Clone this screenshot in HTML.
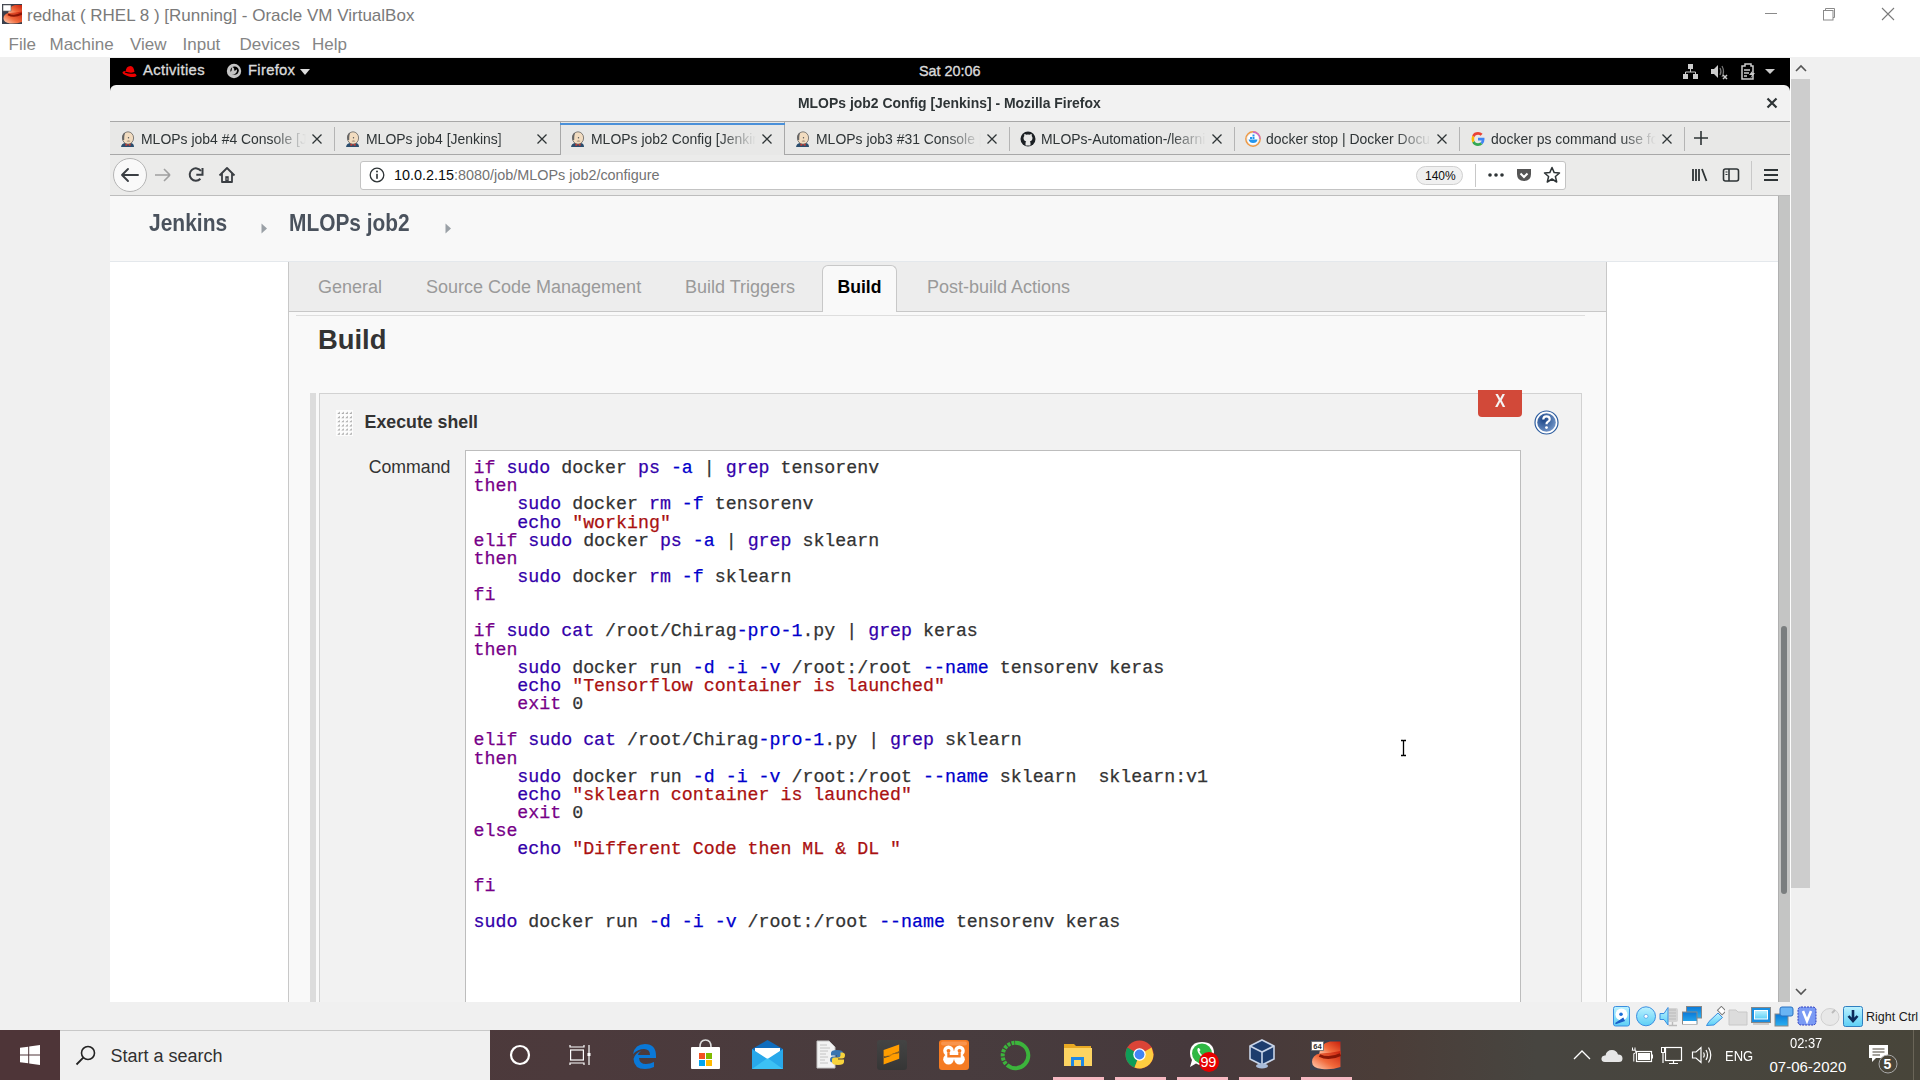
<!DOCTYPE html><html><head><meta charset="utf-8"><title>MLOPs job2 Config</title>
<style>
html,body{margin:0;padding:0;}
body{width:1920px;height:1080px;position:relative;overflow:hidden;background:#f0f0f0;font-family:'Liberation Sans',sans-serif;}
div,svg{box-sizing:border-box;}
</style></head><body>

<div style="position:absolute;left:0px;top:0px;width:1920px;height:57px;background:#ffffff"></div>
<div style="position:absolute;left:27.00px;top:6.61px;font-size:17px;line-height:17px;height:17px;color:#7a7a7a;font-weight:normal;font-family:'Liberation Sans',sans-serif;white-space:pre;">redhat ( RHEL 8 ) [Running] - Oracle VM VirtualBox</div>
<svg style="position:absolute;left:2px;top:4px;" width="20" height="20" viewBox="0 0 20 20"><defs><linearGradient id="rhg2" x1="0" y1="1" x2="1" y2="0"><stop offset="0" stop-color="#ffd6bd"/><stop offset="0.45" stop-color="#f26a3c"/><stop offset="1" stop-color="#c8200c"/></linearGradient></defs><rect width="20" height="20" fill="#3a3f4c"/><path d="M6 10Q6.5 2 13 1H20V10.5Z" fill="url(#rhg2)"/><path d="M1.5 14.5Q1.5 10 6.5 9Q13 8.5 20 7.5V18Q14 20 8 19.5Q1.5 18.5 1.5 14.5Z" fill="url(#rhg2)"/><path d="M6 10.3Q12.5 13.5 20 9.5" stroke="#8a1606" stroke-width="2" fill="none"/><rect x="1" y="1" width="8" height="6" fill="#fff" stroke="#666" stroke-width="0.6"/></svg>
<div style="position:absolute;left:1765px;top:13px;width:12px;height:1px;background:#8a8a8a"></div>
<svg style="position:absolute;left:1822px;top:7px;" width="14" height="14" viewBox="0 0 14 14"><rect x="1.5" y="3.5" width="9.5" height="9.5" fill="none" stroke="#8a8a8a"/><path d="M3.5 3.5V1.5H12.5V10.5H11" fill="none" stroke="#8a8a8a"/></svg>
<svg style="position:absolute;left:1881px;top:7px;" width="14" height="14" viewBox="0 0 14 14"><path d="M1 1L13 13M13 1L1 13" stroke="#7a7a7a" stroke-width="1.1"/></svg>
<div style="position:absolute;left:8.50px;top:35.61px;font-size:17px;line-height:17px;height:17px;color:#858585;font-weight:normal;font-family:'Liberation Sans',sans-serif;white-space:pre;">File</div>
<div style="position:absolute;left:49.50px;top:35.61px;font-size:17px;line-height:17px;height:17px;color:#858585;font-weight:normal;font-family:'Liberation Sans',sans-serif;white-space:pre;">Machine</div>
<div style="position:absolute;left:130.00px;top:35.61px;font-size:17px;line-height:17px;height:17px;color:#858585;font-weight:normal;font-family:'Liberation Sans',sans-serif;white-space:pre;">View</div>
<div style="position:absolute;left:182.50px;top:35.61px;font-size:17px;line-height:17px;height:17px;color:#858585;font-weight:normal;font-family:'Liberation Sans',sans-serif;white-space:pre;">Input</div>
<div style="position:absolute;left:239.50px;top:35.61px;font-size:17px;line-height:17px;height:17px;color:#858585;font-weight:normal;font-family:'Liberation Sans',sans-serif;white-space:pre;">Devices</div>
<div style="position:absolute;left:312.00px;top:35.61px;font-size:17px;line-height:17px;height:17px;color:#858585;font-weight:normal;font-family:'Liberation Sans',sans-serif;white-space:pre;">Help</div>
<div style="position:absolute;left:110px;top:58px;width:1680px;height:27px;background:#000"></div>
<svg style="position:absolute;left:122px;top:65px;" width="16" height="13" viewBox="0 0 16 13"><ellipse cx="7.5" cy="9" rx="7.2" ry="2.6" fill="#e00" transform="rotate(14 7.5 9)"/><path d="M3.5 7.3Q4 1 8.5 1Q12 1.3 12.5 7.5Z" fill="#e00"/><path d="M3 7Q8 9 13 7.6" stroke="#000" stroke-width="1.1" fill="none"/></svg>
<div style="position:absolute;left:143.00px;top:63.27px;font-size:14.8px;line-height:14.8px;height:14.8px;color:#dadada;font-weight:normal;font-family:'Liberation Sans',sans-serif;white-space:pre;-webkit-text-stroke:0.35px #dadada;letter-spacing:0.35px;">Activities</div>
<svg style="position:absolute;left:226px;top:63px;" width="16" height="16" viewBox="0 0 16 16"><circle cx="8" cy="8" r="7.2" fill="#c4c4c4"/><circle cx="8.6" cy="7.6" r="4.2" fill="#000"/><path d="M6 4Q9 5 8 7.5Q10 8 11 6Q11.5 10 8 11.5Q5 12 4 9Q6 9 6 4Z" fill="#c4c4c4"/></svg>
<div style="position:absolute;left:248.00px;top:63.27px;font-size:14.8px;line-height:14.8px;height:14.8px;color:#dadada;font-weight:normal;font-family:'Liberation Sans',sans-serif;white-space:pre;-webkit-text-stroke:0.35px #dadada;letter-spacing:0.3px;">Firefox</div>
<svg style="position:absolute;left:300px;top:69px;" width="11" height="7" viewBox="0 0 11 7"><path d="M0 0H10L5 6Z" fill="#ddd"/></svg>
<div style="position:absolute;left:919.00px;top:63.61px;font-size:14.4px;line-height:14.4px;height:14.4px;color:#dadada;font-weight:normal;font-family:'Liberation Sans',sans-serif;white-space:pre;-webkit-text-stroke:0.35px #dadada;">Sat 20:06</div>
<svg style="position:absolute;left:1683px;top:64px;" width="16" height="16" viewBox="0 0 16 16"><rect x="5" y="0" width="5" height="5" fill="#ccc"/><rect x="0" y="10" width="5" height="5" fill="#ccc"/><rect x="10" y="10" width="5" height="5" fill="#ccc"/><path d="M7.5 5V8M2.5 10V8H12.5V10" stroke="#ccc" fill="none"/></svg>
<svg style="position:absolute;left:1710px;top:64px;" width="18" height="16" viewBox="0 0 18 16"><path d="M1 5H4L8 1V14L4 10H1Z" fill="#ccc"/><path d="M10 4Q12 7.5 10 11M12 2Q15 7.5 12 13" stroke="#777" fill="none" stroke-width="1.2"/><path d="M13 11L17 15M17 11L13 15" stroke="#ccc" stroke-width="1.5"/></svg>
<svg style="position:absolute;left:1741px;top:63px;" width="16" height="17" viewBox="0 0 16 17"><path d="M4 1H10V3H12V16H1V3H4Z" fill="none" stroke="#ccc" stroke-width="1.5"/><path d="M3 7H9M3 10H8M3 13H6" stroke="#ccc" stroke-width="1.5"/><path d="M12 7L8 12H11L9 16L14 10H11Z" fill="#ccc"/></svg>
<svg style="position:absolute;left:1765px;top:69px;" width="11" height="6" viewBox="0 0 11 6"><path d="M0 0H10L5 5Z" fill="#ccc"/></svg>
<div style="position:absolute;left:110px;top:85px;width:1680px;height:8px;background:#000"></div>
<div style="position:absolute;left:110px;top:85px;width:1680px;height:917px;background:#f2f2f2;border-radius:6px 6px 0 0"></div>
<div style="position:absolute;left:798.00px;top:95.84px;font-size:14.6px;line-height:14.6px;height:14.6px;color:#2e3436;font-weight:bold;font-family:'Liberation Sans',sans-serif;white-space:pre;transform:scaleX(0.955);transform-origin:0 0;">MLOPs job2 Config [Jenkins] - Mozilla Firefox</div>
<svg style="position:absolute;left:1766px;top:97px;" width="12" height="12" viewBox="0 0 12 12"><path d="M1.5 1.5L10.5 10.5M10.5 1.5L1.5 10.5" stroke="#2e3436" stroke-width="2.2"/></svg>
<div style="position:absolute;left:110px;top:121px;width:1680px;height:1px;background:#a8a8a8"></div>
<div style="position:absolute;left:110px;top:122px;width:1680px;height:32px;background:#e8e8e7"></div>
<div style="position:absolute;left:110px;top:154px;width:1680px;height:1px;background:#a8a8a8"></div>
<div style="position:absolute;left:334px;top:127px;width:1px;height:24px;background:#b4b4b4"></div>
<svg style="position:absolute;left:120px;top:131px;" width="16" height="16" viewBox="0 0 16 16"><path d="M1 16Q1.5 12.5 5 12L11 12Q14 12.5 14 16Z" fill="#2a4d6e"/><ellipse cx="8" cy="7" rx="5.6" ry="6.2" fill="#f2dcc0" stroke="#555" stroke-width="0.7"/><path d="M2.6 9Q1.8 5 3 3Q4 1.5 5.5 1.5Q4 3.5 4.2 9Z" fill="#666"/><path d="M6.5 10Q8.5 9 10.5 10Q8.5 11 6.5 10Z" fill="#8a7460"/><circle cx="8.5" cy="6.8" r="0.7" fill="#555"/><path d="M5.5 12.5L8 14L10.5 12.5V15L8 14L5.5 15Z" fill="#e03a2a"/></svg>
<div style="position:absolute;left:141px;top:127px;width:165px;height:22px;overflow:hidden;-webkit-mask-image:linear-gradient(to right,#000 130px,transparent 165px);mask-image:linear-gradient(to right,#000 130px,transparent 165px)">
<div style="position:absolute;left:0;top:4.10px;font-size:15px;line-height:15px;color:#2e3436;white-space:pre;transform:scaleX(0.93);transform-origin:0 0">MLOPs job4 #4 Console [Jenkins]</div></div>
<svg style="position:absolute;left:311px;top:133px;" width="12" height="12" viewBox="0 0 12 12"><path d="M1.5 1.5L10.5 10.5M10.5 1.5L1.5 10.5" stroke="#2e3436" stroke-width="1.3"/></svg>
<svg style="position:absolute;left:345px;top:131px;" width="16" height="16" viewBox="0 0 16 16"><path d="M1 16Q1.5 12.5 5 12L11 12Q14 12.5 14 16Z" fill="#2a4d6e"/><ellipse cx="8" cy="7" rx="5.6" ry="6.2" fill="#f2dcc0" stroke="#555" stroke-width="0.7"/><path d="M2.6 9Q1.8 5 3 3Q4 1.5 5.5 1.5Q4 3.5 4.2 9Z" fill="#666"/><path d="M6.5 10Q8.5 9 10.5 10Q8.5 11 6.5 10Z" fill="#8a7460"/><circle cx="8.5" cy="6.8" r="0.7" fill="#555"/><path d="M5.5 12.5L8 14L10.5 12.5V15L8 14L5.5 15Z" fill="#e03a2a"/></svg>
<div style="position:absolute;left:366px;top:127px;width:165px;height:22px;overflow:hidden;-webkit-mask-image:linear-gradient(to right,#000 130px,transparent 165px);mask-image:linear-gradient(to right,#000 130px,transparent 165px)">
<div style="position:absolute;left:0;top:4.10px;font-size:15px;line-height:15px;color:#2e3436;white-space:pre;transform:scaleX(0.93);transform-origin:0 0">MLOPs job4 [Jenkins]</div></div>
<svg style="position:absolute;left:536px;top:133px;" width="12" height="12" viewBox="0 0 12 12"><path d="M1.5 1.5L10.5 10.5M10.5 1.5L1.5 10.5" stroke="#2e3436" stroke-width="1.3"/></svg>
<div style="position:absolute;left:560px;top:122px;width:225px;height:33px;background:#e8e8e7;border-left:1px solid #a8a8a8;border-right:1px solid #a8a8a8"></div>
<div style="position:absolute;left:560px;top:123px;width:225px;height:2px;background:#4a90d9"></div>
<svg style="position:absolute;left:570px;top:131px;" width="16" height="16" viewBox="0 0 16 16"><path d="M1 16Q1.5 12.5 5 12L11 12Q14 12.5 14 16Z" fill="#2a4d6e"/><ellipse cx="8" cy="7" rx="5.6" ry="6.2" fill="#f2dcc0" stroke="#555" stroke-width="0.7"/><path d="M2.6 9Q1.8 5 3 3Q4 1.5 5.5 1.5Q4 3.5 4.2 9Z" fill="#666"/><path d="M6.5 10Q8.5 9 10.5 10Q8.5 11 6.5 10Z" fill="#8a7460"/><circle cx="8.5" cy="6.8" r="0.7" fill="#555"/><path d="M5.5 12.5L8 14L10.5 12.5V15L8 14L5.5 15Z" fill="#e03a2a"/></svg>
<div style="position:absolute;left:591px;top:127px;width:165px;height:22px;overflow:hidden;-webkit-mask-image:linear-gradient(to right,#000 130px,transparent 165px);mask-image:linear-gradient(to right,#000 130px,transparent 165px)">
<div style="position:absolute;left:0;top:4.10px;font-size:15px;line-height:15px;color:#2e3436;white-space:pre;transform:scaleX(0.93);transform-origin:0 0">MLOPs job2 Config [Jenkins]</div></div>
<svg style="position:absolute;left:761px;top:133px;" width="12" height="12" viewBox="0 0 12 12"><path d="M1.5 1.5L10.5 10.5M10.5 1.5L1.5 10.5" stroke="#2e3436" stroke-width="1.3"/></svg>
<div style="position:absolute;left:1009px;top:127px;width:1px;height:24px;background:#b4b4b4"></div>
<svg style="position:absolute;left:795px;top:131px;" width="16" height="16" viewBox="0 0 16 16"><path d="M1 16Q1.5 12.5 5 12L11 12Q14 12.5 14 16Z" fill="#2a4d6e"/><ellipse cx="8" cy="7" rx="5.6" ry="6.2" fill="#f2dcc0" stroke="#555" stroke-width="0.7"/><path d="M2.6 9Q1.8 5 3 3Q4 1.5 5.5 1.5Q4 3.5 4.2 9Z" fill="#666"/><path d="M6.5 10Q8.5 9 10.5 10Q8.5 11 6.5 10Z" fill="#8a7460"/><circle cx="8.5" cy="6.8" r="0.7" fill="#555"/><path d="M5.5 12.5L8 14L10.5 12.5V15L8 14L5.5 15Z" fill="#e03a2a"/></svg>
<div style="position:absolute;left:816px;top:127px;width:165px;height:22px;overflow:hidden;-webkit-mask-image:linear-gradient(to right,#000 130px,transparent 165px);mask-image:linear-gradient(to right,#000 130px,transparent 165px)">
<div style="position:absolute;left:0;top:4.10px;font-size:15px;line-height:15px;color:#2e3436;white-space:pre;transform:scaleX(0.93);transform-origin:0 0">MLOPs job3 #31 Console [Jenkins]</div></div>
<svg style="position:absolute;left:986px;top:133px;" width="12" height="12" viewBox="0 0 12 12"><path d="M1.5 1.5L10.5 10.5M10.5 1.5L1.5 10.5" stroke="#2e3436" stroke-width="1.3"/></svg>
<div style="position:absolute;left:1234px;top:127px;width:1px;height:24px;background:#b4b4b4"></div>
<svg style="position:absolute;left:1020px;top:131px;" width="16" height="16" viewBox="0 0 16 16"><circle cx="8" cy="8" r="7.5" fill="#1b1f23"/><path d="M5.5 14.5V12Q5.5 11 6.2 10.4Q3.5 10 3.5 7Q3.5 5.8 4.3 5Q4 4 4.4 3Q5.4 3 6.4 3.8Q8 3.3 9.6 3.8Q10.6 3 11.6 3Q12 4 11.7 5Q12.5 5.8 12.5 7Q12.5 10 9.8 10.4Q10.5 11 10.5 12V14.5Z" fill="#e8e8e7"/></svg>
<div style="position:absolute;left:1041px;top:127px;width:165px;height:22px;overflow:hidden;-webkit-mask-image:linear-gradient(to right,#000 130px,transparent 165px);mask-image:linear-gradient(to right,#000 130px,transparent 165px)">
<div style="position:absolute;left:0;top:4.10px;font-size:15px;line-height:15px;color:#2e3436;white-space:pre;transform:scaleX(0.93);transform-origin:0 0">MLOPs-Automation-/learning</div></div>
<svg style="position:absolute;left:1211px;top:133px;" width="12" height="12" viewBox="0 0 12 12"><path d="M1.5 1.5L10.5 10.5M10.5 1.5L1.5 10.5" stroke="#2e3436" stroke-width="1.3"/></svg>
<div style="position:absolute;left:1459px;top:127px;width:1px;height:24px;background:#b4b4b4"></div>
<svg style="position:absolute;left:1245px;top:131px;" width="16" height="16" viewBox="0 0 16 16"><circle cx="8" cy="8" r="7.2" fill="none" stroke="#e94" stroke-width="1.4"/><path d="M8 1 A7 7 0 0 1 15 8" fill="none" stroke="#c6c" stroke-width="1.4"/><circle cx="8" cy="8" r="5.6" fill="#fff"/><path d="M3.5 8.5H12.5Q12 12 8 12Q4.5 12 3.5 8.5Z" fill="#2496ed"/><rect x="5" y="6" width="2" height="2" fill="#2496ed"/><rect x="7.5" y="6" width="2" height="2" fill="#2496ed"/><rect x="7.5" y="3.5" width="2" height="2" fill="#2496ed"/></svg>
<div style="position:absolute;left:1266px;top:127px;width:165px;height:22px;overflow:hidden;-webkit-mask-image:linear-gradient(to right,#000 130px,transparent 165px);mask-image:linear-gradient(to right,#000 130px,transparent 165px)">
<div style="position:absolute;left:0;top:4.10px;font-size:15px;line-height:15px;color:#2e3436;white-space:pre;transform:scaleX(0.93);transform-origin:0 0">docker stop | Docker Documentation</div></div>
<svg style="position:absolute;left:1436px;top:133px;" width="12" height="12" viewBox="0 0 12 12"><path d="M1.5 1.5L10.5 10.5M10.5 1.5L1.5 10.5" stroke="#2e3436" stroke-width="1.3"/></svg>
<div style="position:absolute;left:1684px;top:127px;width:1px;height:24px;background:#b4b4b4"></div>
<svg style="position:absolute;left:1470px;top:131px;" width="16" height="16" viewBox="0 0 16 16"><path d="M14.5 8.2Q14.5 7.4 14.4 6.7H8V9.4H11.7Q11.4 10.8 10.3 11.6L12.5 13.3Q14.5 11.4 14.5 8.2Z" fill="#4285f4"/><path d="M8 15Q10.8 15 12.5 13.3L10.3 11.6Q9.4 12.3 8 12.3Q5.4 12.3 4.4 9.9L2.2 11.6Q3.9 15 8 15Z" fill="#34a853"/><path d="M4.4 9.9Q4 8 4.4 6.1L2.2 4.4Q0.8 8 2.2 11.6Z" fill="#fbbc05"/><path d="M8 3.7Q9.5 3.7 10.6 4.7L12.6 2.8Q10.8 1 8 1Q3.9 1 2.2 4.4L4.4 6.1Q5.4 3.7 8 3.7Z" fill="#ea4335"/></svg>
<div style="position:absolute;left:1491px;top:127px;width:165px;height:22px;overflow:hidden;-webkit-mask-image:linear-gradient(to right,#000 130px,transparent 165px);mask-image:linear-gradient(to right,#000 130px,transparent 165px)">
<div style="position:absolute;left:0;top:4.10px;font-size:15px;line-height:15px;color:#2e3436;white-space:pre;transform:scaleX(0.93);transform-origin:0 0">docker ps command use for</div></div>
<svg style="position:absolute;left:1661px;top:133px;" width="12" height="12" viewBox="0 0 12 12"><path d="M1.5 1.5L10.5 10.5M10.5 1.5L1.5 10.5" stroke="#2e3436" stroke-width="1.3"/></svg>
<svg style="position:absolute;left:1693px;top:130px;" width="16" height="16" viewBox="0 0 16 16"><path d="M8 1V15M1 8H15" stroke="#2e3436" stroke-width="1.6"/></svg>
<div style="position:absolute;left:110px;top:155px;width:1680px;height:40px;background:#ebebea"></div>
<div style="position:absolute;left:110px;top:195px;width:1680px;height:1px;background:#bdbdbd"></div>
<svg style="position:absolute;left:112px;top:157px;" width="36" height="36" viewBox="0 0 36 36"><circle cx="18" cy="18" r="16.5" fill="#f9f9f9" stroke="#b5b5b5" stroke-width="1"/><path d="M10 18H26M10 18L16 12M10 18L16 24" stroke="#3a3e43" stroke-width="1.9" fill="none" stroke-linecap="round"/></svg>
<svg style="position:absolute;left:154px;top:167px;" width="18" height="16" viewBox="0 0 18 16"><path d="M1 8H16M16 8L10 2M16 8L10 14" stroke="#a0a0a0" stroke-width="1.6" fill="none"/></svg>
<svg style="position:absolute;left:187px;top:166px;" width="18" height="18" viewBox="0 0 18 18"><path d="M14 5A6.2 6.2 0 1 0 13.4 12.8" stroke="#3a3e43" stroke-width="2" fill="none"/><path d="M9.3 8.7H15.5V2" stroke="#3a3e43" stroke-width="2" fill="none"/></svg>
<svg style="position:absolute;left:218px;top:166px;" width="18" height="18" viewBox="0 0 18 18"><path d="M1.5 9.5L9 2L16.5 9.5M4 7.5V16H14V7.5" stroke="#3a3e43" stroke-width="1.8" fill="none" stroke-linejoin="round"/><rect x="7.3" y="10.2" width="3.4" height="5.8" fill="#3a3e43"/><rect x="8.5" y="12.5" width="1" height="1" fill="#eee"/></svg>
<div style="position:absolute;left:360px;top:161px;width:1206px;height:29px;background:#fff;border:1px solid #c3c3c3;border-radius:3px"></div>
<svg style="position:absolute;left:369px;top:167px;" width="16" height="16" viewBox="0 0 16 16"><circle cx="8" cy="8" r="6.8" fill="none" stroke="#2e3436" stroke-width="1.3"/><rect x="7.2" y="6.8" width="1.6" height="5" fill="#2e3436"/><circle cx="8" cy="4.6" r="1" fill="#2e3436"/></svg>
<div style="position:absolute;left:394.00px;top:167.81px;font-size:14.4px;line-height:14.4px;height:14.4px;color:#0c0c0d;font-weight:normal;font-family:'Liberation Sans',sans-serif;white-space:pre;">10.0.2.15<span style="color:#737373">:8080/job/MLOPs job2/configure</span></div>
<div style="position:absolute;left:1416px;top:166px;width:47px;height:19px;background:#f0f0f0;border:1px solid #d0d0d0;border-radius:10px"></div>
<div style="position:absolute;left:1425.00px;top:169.84px;font-size:12px;line-height:12px;height:12px;color:#0c0c0d;font-weight:normal;font-family:'Liberation Sans',sans-serif;white-space:pre;">140%</div>
<div style="position:absolute;left:1475px;top:164px;width:1px;height:23px;background:#c8c8c8"></div>
<svg style="position:absolute;left:1487px;top:171px;" width="18" height="8" viewBox="0 0 18 8"><circle cx="3" cy="4" r="1.8" fill="#2e3436"/><circle cx="9" cy="4" r="1.8" fill="#2e3436"/><circle cx="15" cy="4" r="1.8" fill="#2e3436"/></svg>
<svg style="position:absolute;left:1515px;top:166px;" width="18" height="18" viewBox="0 0 18 18"><path d="M2 3H16V8Q16 15 9 15Q2 15 2 8Z" fill="#555"/><path d="M5.5 7.5L9 11L12.5 7.5" stroke="#fff" stroke-width="2" fill="none"/></svg>
<svg style="position:absolute;left:1543px;top:166px;" width="18" height="18" viewBox="0 0 18 18"><path d="M9 1.5L11.2 6.6L16.5 7L12.4 10.5L13.7 16L9 13L4.3 16L5.6 10.5L1.5 7L6.8 6.6Z" fill="none" stroke="#2e3436" stroke-width="1.5" stroke-linejoin="round"/></svg>
<svg style="position:absolute;left:1691px;top:166px;" width="18" height="18" viewBox="0 0 18 18"><path d="M2 3V15M5 3V15M8 3V15M11 3L15.5 15" stroke="#2e3436" stroke-width="1.8"/></svg>
<svg style="position:absolute;left:1722px;top:166px;" width="18" height="18" viewBox="0 0 18 18"><rect x="1.5" y="3" width="15" height="12" rx="2" fill="none" stroke="#2e3436" stroke-width="1.6"/><path d="M7 3V15" stroke="#2e3436" stroke-width="1.6"/><path d="M3.5 6H5.5M3.5 8.5H5.5" stroke="#2e3436" stroke-width="1"/></svg>
<div style="position:absolute;left:1751px;top:161px;width:1px;height:29px;background:#c8c8c8"></div>
<svg style="position:absolute;left:1763px;top:166px;" width="16" height="18" viewBox="0 0 16 18"><path d="M1 4H15M1 9H15M1 14H15" stroke="#2e3436" stroke-width="1.8"/></svg>
<div style="position:absolute;left:110px;top:196px;width:1668px;height:806px;background:#fff"></div>
<div style="position:absolute;left:110px;top:196px;width:1668px;height:65px;background:#f8f8f8"></div>
<div style="position:absolute;left:110px;top:261px;width:1668px;height:1px;background:#e4e8ec"></div>
<div style="position:absolute;left:149.00px;top:212.02px;font-size:23.6px;line-height:23.6px;height:23.6px;color:#4a525d;font-weight:bold;font-family:'Liberation Sans',sans-serif;white-space:pre;transform:scaleX(0.89);transform-origin:0 0;">Jenkins</div>
<svg style="position:absolute;left:261px;top:223px;" width="7" height="11" viewBox="0 0 7 11"><path d="M0.5 0.5L6 5.5L0.5 10.5Z" fill="#9aa0a6"/></svg>
<div style="position:absolute;left:289.00px;top:212.02px;font-size:23.6px;line-height:23.6px;height:23.6px;color:#4a525d;font-weight:bold;font-family:'Liberation Sans',sans-serif;white-space:pre;transform:scaleX(0.885);transform-origin:0 0;">MLOPs job2</div>
<svg style="position:absolute;left:445px;top:223px;" width="7" height="11" viewBox="0 0 7 11"><path d="M0.5 0.5L6 5.5L0.5 10.5Z" fill="#9aa0a6"/></svg>
<div style="position:absolute;left:288px;top:262px;width:1319px;height:740px;background:#f9f9f9;border-left:1px solid #c8c8c8;border-right:1px solid #c8c8c8"></div>
<div style="position:absolute;left:289px;top:262px;width:1317px;height:49px;background:#ededed"></div>
<div style="position:absolute;left:289px;top:311px;width:1317px;height:1px;background:#c8c8c8"></div>
<div style="position:absolute;left:296px;top:315px;width:1289px;height:1px;background:#dedede"></div>
<div style="position:absolute;left:822px;top:265px;width:75px;height:47px;background:#f9f9f9;border:1px solid #c8c8c8;border-bottom:none;border-radius:6px 6px 0 0"></div>
<div style="position:absolute;left:318.00px;top:278.16px;font-size:18px;line-height:18px;height:18px;color:#9a9a9a;font-weight:normal;font-family:'Liberation Sans',sans-serif;white-space:pre;">General</div>
<div style="position:absolute;left:426.00px;top:278.16px;font-size:18px;line-height:18px;height:18px;color:#9a9a9a;font-weight:normal;font-family:'Liberation Sans',sans-serif;white-space:pre;">Source Code Management</div>
<div style="position:absolute;left:685.00px;top:278.16px;font-size:18px;line-height:18px;height:18px;color:#9a9a9a;font-weight:normal;font-family:'Liberation Sans',sans-serif;white-space:pre;">Build Triggers</div>
<div style="position:absolute;left:927.00px;top:278.16px;font-size:18px;line-height:18px;height:18px;color:#9a9a9a;font-weight:normal;font-family:'Liberation Sans',sans-serif;white-space:pre;">Post-build Actions</div>
<div style="position:absolute;left:837.50px;top:278.50px;font-size:17.6px;line-height:17.6px;height:17.6px;color:#000;font-weight:bold;font-family:'Liberation Sans',sans-serif;white-space:pre;">Build</div>
<div style="position:absolute;left:318.00px;top:325.81px;font-size:27.4px;line-height:27.4px;height:27.4px;color:#333;font-weight:bold;font-family:'Liberation Sans',sans-serif;white-space:pre;">Build</div>
<div style="position:absolute;left:310px;top:393px;width:6px;height:609px;background:#dcdcdc"></div>
<div style="position:absolute;left:319px;top:393px;width:1263px;height:609px;background:#f2f2f2;border:1px solid #d2d2d2;border-bottom:none"></div>
<div style="position:absolute;left:1478px;top:390px;width:44px;height:27px;background:#d24939;border-radius:0 0 4px 4px"></div>
<div style="position:absolute;left:1494.60px;top:391.96px;font-size:18px;line-height:18px;height:18px;color:#f4f4f4;font-weight:bold;font-family:'Liberation Sans',sans-serif;white-space:pre;transform:scaleX(0.86);transform-origin:0 0;">X</div>
<svg style="position:absolute;left:1534px;top:410px;" width="25" height="25" viewBox="0 0 25 25"><defs><radialGradient id="hg" cx="0.35" cy="0.35" r="0.8"><stop offset="0" stop-color="#1c4687"/><stop offset="1" stop-color="#7c9fd0"/></radialGradient></defs><circle cx="12.5" cy="12.5" r="11.5" fill="#fff" stroke="#2d5d9f" stroke-width="1.2"/><circle cx="12.5" cy="12.5" r="9.3" fill="url(#hg)"/><path d="M9.3 9.5Q9.3 6.3 12.5 6.3Q15.7 6.3 15.7 9.2Q15.7 11 13.6 12Q12.5 12.6 12.5 14.2" stroke="#fff" stroke-width="2.2" fill="none"/><circle cx="12.5" cy="17.6" r="1.4" fill="#fff"/></svg>
<svg style="position:absolute;left:336px;top:410px;" width="17" height="26" viewBox="0 0 17 26"><rect width="17" height="26" fill="#fcfcfc"/><path d="M1.3 4.00L3.8 1.60V4.00Z" fill="#a8a8a8"/><path d="M1.3 8.15L3.8 5.75V8.15Z" fill="#a8a8a8"/><path d="M1.3 12.30L3.8 9.90V12.30Z" fill="#a8a8a8"/><path d="M1.3 16.45L3.8 14.05V16.45Z" fill="#a8a8a8"/><path d="M1.3 20.60L3.8 18.20V20.60Z" fill="#a8a8a8"/><path d="M1.3 24.75L3.8 22.35V24.75Z" fill="#a8a8a8"/><path d="M5.3 4.00L7.8 1.60V4.00Z" fill="#a8a8a8"/><path d="M5.3 8.15L7.8 5.75V8.15Z" fill="#a8a8a8"/><path d="M5.3 12.30L7.8 9.90V12.30Z" fill="#a8a8a8"/><path d="M5.3 16.45L7.8 14.05V16.45Z" fill="#a8a8a8"/><path d="M5.3 20.60L7.8 18.20V20.60Z" fill="#a8a8a8"/><path d="M5.3 24.75L7.8 22.35V24.75Z" fill="#a8a8a8"/><path d="M9.3 4.00L11.8 1.60V4.00Z" fill="#a8a8a8"/><path d="M9.3 8.15L11.8 5.75V8.15Z" fill="#a8a8a8"/><path d="M9.3 12.30L11.8 9.90V12.30Z" fill="#a8a8a8"/><path d="M9.3 16.45L11.8 14.05V16.45Z" fill="#a8a8a8"/><path d="M9.3 20.60L11.8 18.20V20.60Z" fill="#a8a8a8"/><path d="M9.3 24.75L11.8 22.35V24.75Z" fill="#a8a8a8"/><path d="M13.3 4.00L15.8 1.60V4.00Z" fill="#a8a8a8"/><path d="M13.3 8.15L15.8 5.75V8.15Z" fill="#a8a8a8"/><path d="M13.3 12.30L15.8 9.90V12.30Z" fill="#a8a8a8"/><path d="M13.3 16.45L15.8 14.05V16.45Z" fill="#a8a8a8"/><path d="M13.3 20.60L15.8 18.20V20.60Z" fill="#a8a8a8"/><path d="M13.3 24.75L15.8 22.35V24.75Z" fill="#a8a8a8"/></svg>
<div style="position:absolute;left:364.60px;top:413.67px;font-size:17.76px;line-height:17.76px;height:17.76px;color:#333;font-weight:bold;font-family:'Liberation Sans',sans-serif;white-space:pre;">Execute shell</div>
<div style="position:absolute;left:368.75px;top:459.42px;font-size:17.7px;line-height:17.7px;height:17.7px;color:#333;font-weight:normal;font-family:'Liberation Sans',sans-serif;white-space:pre;">Command</div>
<div style="position:absolute;left:465px;top:450px;width:1056px;height:560px;background:#fff;border:1px solid #bdbdbd"></div>
<style>.cm{position:absolute;font-family:"Liberation Mono",monospace;white-space:pre;color:#333;-webkit-text-stroke:0.25px currentColor}.cm .k{color:#770088}.cm .b{color:#3300aa}.cm .a{color:#0000cc}.cm .s{color:#aa1111}</style>
<div class="cm" style="left:473.5px;top:459.06px;font-size:18.27px;line-height:18.15px"><span class="k">if</span> <span class="b">sudo</span> docker <span class="b">ps</span> <span class="a">-a</span> | <span class="b">grep</span> tensorenv
<span class="k">then</span>
    <span class="b">sudo</span> docker <span class="b">rm</span> <span class="a">-f</span> tensorenv
    <span class="b">echo</span> <span class="s">"working"</span>
<span class="k">elif</span> <span class="b">sudo</span> docker <span class="b">ps</span> <span class="a">-a</span> | <span class="b">grep</span> sklearn
<span class="k">then</span>
    <span class="b">sudo</span> docker <span class="b">rm</span> <span class="a">-f</span> sklearn
<span class="k">fi</span>

<span class="k">if</span> <span class="b">sudo</span> <span class="b">cat</span> /root/Chirag<span class="a">-pro-1</span>.py | <span class="b">grep</span> keras
<span class="k">then</span>
    <span class="b">sudo</span> docker run <span class="a">-d</span> <span class="a">-i</span> <span class="a">-v</span> /root:/root <span class="a">--name</span> tensorenv keras
    <span class="b">echo</span> <span class="s">"Tensorflow container is launched"</span>
    <span class="k">exit</span> 0

<span class="k">elif</span> <span class="b">sudo</span> <span class="b">cat</span> /root/Chirag<span class="a">-pro-1</span>.py | <span class="b">grep</span> sklearn
<span class="k">then</span>
    <span class="b">sudo</span> docker run <span class="a">-d</span> <span class="a">-i</span> <span class="a">-v</span> /root:/root <span class="a">--name</span> sklearn  sklearn:v1
    <span class="b">echo</span> <span class="s">"sklearn container is launched"</span>
    <span class="k">exit</span> 0
<span class="k">else</span>
    <span class="b">echo</span> <span class="s">"Different Code then ML &amp; DL "</span>

<span class="k">fi</span>

<span class="b">sudo</span> docker run <span class="a">-d</span> <span class="a">-i</span> <span class="a">-v</span> /root:/root <span class="a">--name</span> tensorenv keras</div>
<svg style="position:absolute;left:1398px;top:736px;" width="12" height="22" viewBox="0 0 12 22"><path d="M4 5.5Q5.5 4 7.5 5.5M3.5 20Q5.5 18 8 20" stroke="#fff" stroke-width="2.2" fill="none" opacity="0.6"/><path d="M3 4.5H5Q5.5 5 6 4.5H8M3 19.5H5Q5.5 19 6 19.5H8M5.5 5V19" stroke="#000" stroke-width="1.3" fill="none"/></svg>
<div style="position:absolute;left:1778px;top:196px;width:12px;height:806px;background:#c4c5c4;border-left:1px solid #b0b0b0"></div>
<div style="position:absolute;left:1781px;top:626px;width:6px;height:268px;background:#7a7e7f;border-radius:3px"></div>
<div style="position:absolute;left:1790px;top:58px;width:1px;height:944px;background:#fcfcfc"></div>
<div style="position:absolute;left:1791px;top:79px;width:19px;height:809px;background:#cdcdcd"></div>
<svg style="position:absolute;left:1795px;top:64px;" width="12" height="9" viewBox="0 0 12 9"><path d="M1 7L6 2L11 7" stroke="#555" stroke-width="1.6" fill="none"/></svg>
<svg style="position:absolute;left:1795px;top:987px;" width="12" height="9" viewBox="0 0 12 9"><path d="M1 2L6 7L11 2" stroke="#555" stroke-width="1.6" fill="none"/></svg>
<div style="position:absolute;left:0px;top:1002px;width:1920px;height:28px;background:#f0f0f0"></div>
<svg width="0" height="0" style="position:absolute"><defs><linearGradient id="lbg" x1="0" y1="0" x2="0" y2="1"><stop offset="0" stop-color="#bdf2ff"/><stop offset="1" stop-color="#5ccff6"/></linearGradient><linearGradient id="dbg" x1="0" y1="0" x2="0" y2="1"><stop offset="0" stop-color="#0a78d8"/><stop offset="1" stop-color="#2ab0f0"/></linearGradient></defs></svg>
<svg style="position:absolute;left:1613px;top:1006px;" width="20" height="21" viewBox="0 0 20 21"><rect x="0.5" y="0.5" width="16" height="19.5" rx="2" fill="url(#lbg)" stroke="#3a8ee0"/><circle cx="8.5" cy="8.5" r="6" fill="#fff"/><circle cx="8" cy="8.3" r="1.8" fill="#1a6ed8"/><path d="M2.5 17.5L10 12.5L11 14.5Z" fill="#1a5ec8" stroke="#1a5ec8" stroke-width="1.5"/></svg>
<svg style="position:absolute;left:1636px;top:1006px;" width="20" height="21" viewBox="0 0 20 21"><circle cx="10" cy="10.3" r="9.5" fill="url(#lbg)" stroke="#3a8ee0"/><circle cx="10" cy="10.3" r="2" fill="#fff" stroke="#3a8ee0" stroke-width="0.6"/></svg>
<svg style="position:absolute;left:1659px;top:1006px;" width="20" height="21" viewBox="0 0 20 21"><rect x="8" y="2" width="11" height="14" rx="2" fill="#d4d4d4"/><path d="M10 4H17M10 7H17M10 10H17M10 13H17" stroke="#aaa" stroke-width="0.6"/><path d="M13.5 16V19M9.5 19.5H18" stroke="#bbb" stroke-width="1.4"/><path d="M1 7.5H5L9 1.5V19L5 13.5H1Z" fill="url(#lbg)" stroke="#3a8ee0"/></svg>
<svg style="position:absolute;left:1682px;top:1006px;" width="20" height="21" viewBox="0 0 20 21"><rect x="4.5" y="0.5" width="15" height="11.5" fill="url(#dbg)" stroke="#888"/><rect x="0.5" y="6" width="14.5" height="12" fill="url(#dbg)" stroke="#888"/><rect x="1" y="15" width="13.5" height="3" fill="#fff"/></svg>
<svg style="position:absolute;left:1705px;top:1006px;" width="20" height="21" viewBox="0 0 20 21"><path d="M1.5 19.5L4 15.5L13 7L17.5 11.5L9 19Z" fill="url(#lbg)" stroke="#3a8ee0"/><rect x="13" y="1.5" width="6.5" height="5.5" fill="#fff" stroke="#777" transform="rotate(45 16 5)"/></svg>
<svg style="position:absolute;left:1728px;top:1006px;" width="20" height="21" viewBox="0 0 20 21"><path d="M1 4H8L10 6H19V19H1Z" fill="#dcdcdc" stroke="#c8c8c8"/></svg>
<svg style="position:absolute;left:1751px;top:1006px;" width="20" height="21" viewBox="0 0 20 21"><rect x="0.5" y="1.5" width="19" height="15" fill="#1a8ee0" stroke="#888"/><rect x="3.5" y="4.5" width="13" height="8.5" fill="url(#lbg)" stroke="#fff"/><path d="M2 17H18V19H2Z" fill="#ccc"/></svg>
<svg style="position:absolute;left:1774px;top:1006px;" width="20" height="21" viewBox="0 0 20 21"><rect x="1" y="8" width="13" height="12" fill="url(#dbg)" stroke="#888"/><rect x="6" y="1" width="13" height="9" rx="2" fill="#6ab4f4" stroke="#2a70c0"/></svg>
<svg style="position:absolute;left:1797px;top:1006px;" width="20" height="21" viewBox="0 0 20 21"><rect x="1" y="1" width="18" height="18" rx="3" fill="#7a9af4" stroke="#2f3fbf" stroke-dasharray="2 1"/><path d="M6 5L10 15L14 5" stroke="#fff" stroke-width="2.6" fill="none"/></svg>
<svg style="position:absolute;left:1820px;top:1006px;" width="20" height="21" viewBox="0 0 20 21"><ellipse cx="10" cy="11" rx="9" ry="8.5" fill="#e8e8e8" stroke="#d0d0d0"/><path d="M12 7L15 4" stroke="#bbb" stroke-width="2"/></svg>
<svg style="position:absolute;left:1843px;top:1006px;" width="20" height="21" viewBox="0 0 20 21"><rect x="0.5" y="0.5" width="19" height="20" rx="2" fill="url(#lbg)" stroke="#2f7fc0"/><path d="M10 4V14M5.5 10L10 15L14.5 10" stroke="#0b2a5a" stroke-width="2.6" fill="none"/></svg>
<div style="position:absolute;left:1866.00px;top:1010.72px;font-size:12.5px;line-height:12.5px;height:12.5px;color:#1a1a1a;font-weight:normal;font-family:'Liberation Sans',sans-serif;white-space:pre;">Right Ctrl</div>
<div style="position:absolute;left:0px;top:1030px;width:1920px;height:50px;background:linear-gradient(90deg,#4d3739 0%,#4c3a3c 30%,#483c3e 50%,#46393c 62%,#4b3d38 72%,#474540 80%,#48453a 100%)"></div>
<div style="position:absolute;left:0px;top:1030px;width:60px;height:50px;background:#4e3538"></div>
<svg style="position:absolute;left:20px;top:1045px;" width="20" height="20" viewBox="0 0 20 20"><path d="M0 2.8L8.2 1.7V9.5H0Z M9.2 1.5L20 0V9.5H9.2Z M0 10.5H8.2V18.3L0 17.2Z M9.2 10.5H20V20L9.2 18.5Z" fill="#fff"/></svg>
<div style="position:absolute;left:60px;top:1030px;width:430px;height:50px;background:#f0f0f0;border-top:1px solid #c8c8c8"></div>
<svg style="position:absolute;left:75px;top:1044px;" width="22" height="22" viewBox="0 0 22 22"><circle cx="13" cy="9" r="6.5" fill="none" stroke="#222" stroke-width="1.6"/><path d="M8.3 13.7L1.5 20.5" stroke="#222" stroke-width="1.8"/></svg>
<div style="position:absolute;left:110.50px;top:1047.16px;font-size:18px;line-height:18px;height:18px;color:#303030;font-weight:normal;font-family:'Liberation Sans',sans-serif;white-space:pre;">Start a search</div>
<svg style="position:absolute;left:509px;top:1044px;" width="22" height="22" viewBox="0 0 22 22"><circle cx="11" cy="11" r="9" fill="none" stroke="#fff" stroke-width="2.2"/></svg>
<svg style="position:absolute;left:569px;top:1044px;" width="22" height="22" viewBox="0 0 22 22"><path d="M1 1V3H15V1M1 21V19H15V21" stroke="#fff" stroke-width="1.2" fill="none"/><rect x="1.6" y="6" width="12.8" height="10" fill="none" stroke="#fff" stroke-width="1.2"/><path d="M20 1V21" stroke="#fff" stroke-width="1.2"/><rect x="18.5" y="9" width="3" height="3" fill="#fff"/></svg>
<svg style="position:absolute;left:631px;top:1042px;" width="26" height="27" viewBox="0 0 26 27"><path d="M2 12Q4 2 14 2Q25 2 25 14V16H8Q8.5 22 15 22Q19 22 23 20V25Q19 27 14 27Q3 27 2.5 17Q4 11 10 9Q7 11 7 13H19Q19 7 13 7Q7 7 2 12Z" fill="#0a78d7"/></svg>
<svg style="position:absolute;left:690px;top:1039px;" width="31" height="31" viewBox="0 0 31 31"><path d="M10 8Q10 1 15.5 1Q21 1 21 8" stroke="#ddd" stroke-width="1.6" fill="none"/><rect x="1" y="8" width="29" height="22" rx="1" fill="#fff"/><rect x="9" y="14" width="6" height="6" fill="#f25022"/><rect x="16" y="14" width="6" height="6" fill="#7fba00"/><rect x="9" y="21" width="6" height="6" fill="#00a4ef"/><rect x="16" y="21" width="6" height="6" fill="#ffb900"/></svg>
<svg style="position:absolute;left:752px;top:1040px;" width="31" height="30" viewBox="0 0 31 30"><path d="M0 9L15.5 0L31 9V29H0Z" fill="#0f6cbd"/><path d="M3 8H28V14L15.5 20L3 14Z" fill="#fff"/><path d="M0 9L15.5 19L31 9V29H0Z" fill="#28a8ea"/><path d="M0 29L15.5 18L31 29Z" fill="#50d9ff" opacity="0.5"/></svg>
<svg style="position:absolute;left:816px;top:1040px;" width="30" height="29" viewBox="0 0 30 29"><path d="M1 1H13L19 7V28H1Z" fill="#f2f2f2" stroke="#c4c4c4"/><path d="M4 5H11M4 8H14M4 11H12M4 14H10M4 17H12M4 20H9M4 23H12" stroke="#b8b8b8" stroke-width="0.8"/><path d="M21 10Q15 10 15 13V15.5H21V16.5H17Q14 16.5 14 20Q14 22.5 17 22.5H18.5V19.5Q18.5 17.5 21 17.5H25Q27 17.5 27 15.5V13Q27 10 21 10Z" fill="#3a75b0"/><path d="M22 25Q28 25 28 22V19.5H22V18.5H26Q29 18.5 29 15Q29 12.5 26 12.5H24.5V15.5Q24.5 17.5 22 17.5H18Q16 17.5 16 19.5V22Q16 25 22 25Z" fill="#f7d33c"/></svg>
<svg style="position:absolute;left:877px;top:1040px;" width="30" height="30" viewBox="0 0 30 30"><defs><linearGradient id="sbg" x1="0" y1="0" x2="0" y2="1"><stop offset="0" stop-color="#444"/><stop offset="1" stop-color="#363636"/></linearGradient></defs><rect width="30" height="30" rx="3" fill="url(#sbg)"/><path d="M6.6 10L22.2 4.6V18.8L6.6 24.4Z" fill="#ff9d00"/><path d="M6.6 16.2L15 15.6L6.6 18.2Z" fill="#3d3d3d"/><path d="M22.2 11.2L13 14.8L22.2 12.9Z" fill="#3d3d3d"/><path d="M6.6 17.2L22.2 12" stroke="#d98200" stroke-width="0.6"/></svg>
<svg style="position:absolute;left:939px;top:1040px;" width="30" height="30" viewBox="0 0 30 30"><rect width="30" height="30" rx="3" fill="#f57b22"/><rect x="2" y="1.5" width="26" height="4" rx="2" fill="#fba060" opacity="0.7"/><circle cx="9.5" cy="10.8" r="5.3" fill="#fff"/><circle cx="20.5" cy="10.8" r="5.3" fill="#fff"/><circle cx="9.5" cy="19.2" r="5.3" fill="#fff"/><circle cx="20.5" cy="19.2" r="5.3" fill="#fff"/><rect x="9" y="11" width="12" height="8" fill="#fff"/><circle cx="9.5" cy="10.8" r="1.9" fill="#f57b22"/><circle cx="20.5" cy="10.8" r="1.9" fill="#f57b22"/><path d="M9.5 12.5V16.2H20.5V12.5" stroke="#f57b22" stroke-width="2.4" fill="none"/></svg>
<svg style="position:absolute;left:1000px;top:1040px;" width="31" height="31" viewBox="0 0 31 31"><circle cx="15.5" cy="15.5" r="12.8" fill="none" stroke="#3cb43c" stroke-width="4" stroke-dasharray="49.6 1.5 3 1.2 3 1.2 3 1.2 3 1.2 3 1.2 3 1.2 3 1.2 2.2 1.5" transform="rotate(-92 15.5 15.5)"/></svg>
<svg style="position:absolute;left:1063px;top:1042px;" width="30" height="25" viewBox="0 0 30 25"><path d="M1 2H11L13 4H28V24H1Z" fill="#e8a923"/><rect x="1" y="6" width="28" height="18" fill="#fcd462"/><path d="M8 24V15H21V24H18V18H11V24Z" fill="#1e88e5"/></svg>
<svg style="position:absolute;left:1125px;top:1040px;" width="29" height="29" viewBox="0 0 29 29"><circle cx="14.5" cy="14.5" r="14" fill="#db4437"/><path d="M14.5 14.5L2.4 7.5A14 14 0 0 0 9.5 27.6Z" fill="#0f9d58"/><path d="M14.5 14.5L9.5 27.6A14 14 0 0 0 28.5 14.5L26.6 7.5Z" fill="#ffcd40"/><circle cx="14.5" cy="14.5" r="6.2" fill="#fff"/><circle cx="14.5" cy="14.5" r="4.9" fill="#4285f4"/></svg>
<svg style="position:absolute;left:1188px;top:1040px;" width="32" height="33" viewBox="0 0 32 33"><path d="M2 27L4 20Q2 17 2 13.5Q2 2 14 2Q26 2 26 13.5Q26 25 14 25Q10.5 25 8 23.5Z" fill="#fff"/><circle cx="14" cy="13.5" r="10" fill="#2fb844"/><path d="M10 8Q9 9 9.5 11Q11 16 16 18Q18 18.5 19 17L17 15L15.5 16Q12.5 14.5 11.5 11.5L12.5 10L11 8Z" fill="#fff"/><circle cx="21" cy="22" r="10" fill="#e60000"/></svg>
<div style="position:absolute;left:1200.50px;top:1055.23px;font-size:14.5px;line-height:14.5px;height:14.5px;color:#fff;font-weight:normal;font-family:'Liberation Sans',sans-serif;white-space:pre;letter-spacing:-0.3px">99</div>
<svg style="position:absolute;left:1249px;top:1039px;" width="26" height="30" viewBox="0 0 26 30"><path d="M13 1L25 7V20L13 26L1 20V7Z" fill="#1d3d6e" stroke="#c8d4e8" stroke-width="1.6"/><path d="M1 7L13 13L25 7M13 13V26" stroke="#c8d4e8" stroke-width="1.6" fill="none"/><ellipse cx="13" cy="27" rx="6" ry="2.5" fill="#a9bbd8"/></svg>
<svg style="position:absolute;left:1310px;top:1040px;" width="31" height="30" viewBox="0 0 31 30"><defs><linearGradient id="rhg" x1="0" y1="1" x2="1" y2="0"><stop offset="0" stop-color="#ffd6bd"/><stop offset="0.45" stop-color="#f26a3c"/><stop offset="1" stop-color="#c8200c"/></linearGradient></defs><rect width="31" height="30" fill="#3a3f4c"/><path d="M9 15Q10 3 20 1.5H30.5V16Z" fill="url(#rhg)"/><path d="M2 22Q2 15 10 13.5Q20 13 30.5 11V27Q22 30 12 29Q2 28 2 22Z" fill="url(#rhg)"/><path d="M9.5 15.5Q19 20 30.5 14.5" stroke="#8a1606" stroke-width="3" fill="none"/><rect x="1.5" y="1.5" width="12" height="9" fill="#fff" stroke="#666" stroke-width="0.8"/><text x="7.5" y="9" font-size="7.5" font-weight="bold" text-anchor="middle" fill="#333" font-family="Liberation Sans">64</text></svg>
<div style="position:absolute;left:1053px;top:1077px;width:51px;height:3px;background:#f6b9c2"></div>
<div style="position:absolute;left:1115px;top:1077px;width:51px;height:3px;background:#f6b9c2"></div>
<div style="position:absolute;left:1177px;top:1077px;width:51px;height:3px;background:#f6b9c2"></div>
<div style="position:absolute;left:1239px;top:1077px;width:51px;height:3px;background:#f6b9c2"></div>
<div style="position:absolute;left:1301px;top:1077px;width:51px;height:3px;background:#f6b9c2"></div>
<svg style="position:absolute;left:1572px;top:1049px;" width="20" height="12" viewBox="0 0 20 12"><path d="M2 10L10 2L18 10" stroke="#fff" stroke-width="1.3" fill="none"/></svg>
<svg style="position:absolute;left:1601px;top:1047px;" width="22" height="16" viewBox="0 0 22 16"><path d="M4 15Q0 15 0.5 11Q1 8 4.5 8.5Q5.5 3 11 3Q15.5 3 17 7.5Q21.5 7.5 21.5 11.5Q21.5 15 18 15Z" fill="#e6e6e6"/></svg>
<svg style="position:absolute;left:1631px;top:1047px;" width="22" height="16" viewBox="0 0 22 16"><rect x="5.5" y="4.5" width="15" height="10" fill="none" stroke="#fff" stroke-width="1.2"/><rect x="7" y="6" width="12" height="7" fill="#fff"/><rect x="20.5" y="7.5" width="1.5" height="4" fill="#fff"/><path d="M1.5 0.5V3M4 0.5V3M0.8 3.2H4.7V5.5Q4.7 6.5 2.8 6.5V14.5" stroke="#fff" stroke-width="1" fill="none"/></svg>
<svg style="position:absolute;left:1661px;top:1045px;" width="22" height="20" viewBox="0 0 22 20"><rect x="4.5" y="2.5" width="16" height="13" fill="none" stroke="#fff" stroke-width="1.2"/><path d="M12.5 15.5V18.5M8 18.5H17M2 8V18" stroke="#fff" stroke-width="1.2"/><rect x="0.5" y="2.5" width="3" height="5" fill="none" stroke="#fff" stroke-width="1"/></svg>
<svg style="position:absolute;left:1691px;top:1045px;" width="22" height="20" viewBox="0 0 22 20"><path d="M1.5 7H5L10 2.5V17.5L5 13H1.5Z" fill="none" stroke="#fff" stroke-width="1.2"/><path d="M12.5 7.5Q14 10 12.5 12.5M15 5Q18 10 15 15M17.5 2.5Q22 10 17.5 17.5" stroke="#fff" stroke-width="1.2" fill="none"/></svg>
<div style="position:absolute;left:1725.00px;top:1048.65px;font-size:14px;line-height:14px;height:14px;color:#fff;font-weight:normal;font-family:'Liberation Sans',sans-serif;white-space:pre;transform:scaleX(0.93);transform-origin:0 0;">ENG</div>
<div style="position:absolute;left:1789.50px;top:1035.10px;font-size:15px;line-height:15px;height:15px;color:#fff;font-weight:normal;font-family:'Liberation Sans',sans-serif;white-space:pre;transform:scaleX(0.86);transform-origin:0 0;">02:37</div>
<div style="position:absolute;left:1769.50px;top:1058.80px;font-size:15px;line-height:15px;height:15px;color:#fff;font-weight:normal;font-family:'Liberation Sans',sans-serif;white-space:pre;">07-06-2020</div>
<svg style="position:absolute;left:1868px;top:1043px;" width="32" height="32" viewBox="0 0 32 32"><path d="M1 2H20V15H8L4 19V15H1Z" fill="#fff"/><path d="M4.5 6H16.5M4.5 9H16.5M4.5 12H12" stroke="#4a4539" stroke-width="1.2"/><circle cx="20" cy="21" r="9" fill="#4a4539" stroke="#aaa" stroke-width="1"/></svg>
<div style="position:absolute;left:1883.50px;top:1057.15px;font-size:14px;line-height:14px;height:14px;color:#fff;font-weight:bold;font-family:'Liberation Sans',sans-serif;white-space:pre;">5</div>
<div style="position:absolute;left:1913px;top:1030px;width:1px;height:50px;background:#6a6558"></div>
</body></html>
